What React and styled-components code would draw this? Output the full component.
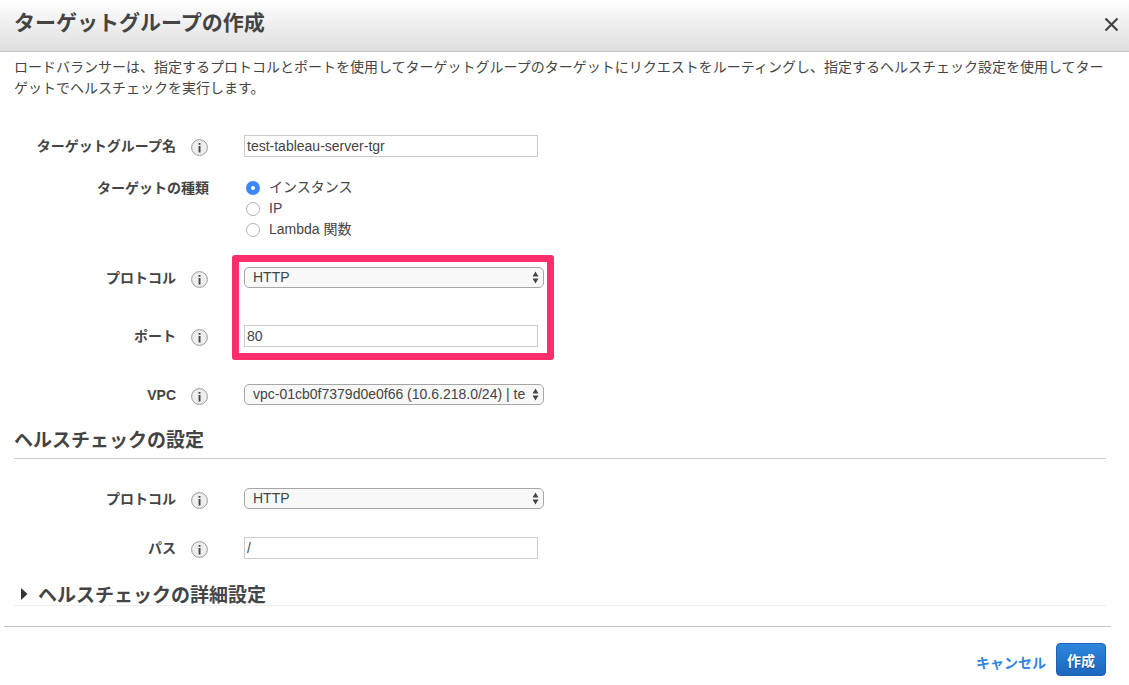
import React, { useState } from 'react';
import styled, { createGlobalStyle } from 'styled-components';

const GlobalStyle = createGlobalStyle`
  * {
    box-sizing: border-box;
  }

  body {
    margin: 0;
    background: #fff;
    color: #444;
    font-family: "Liberation Sans", "Noto Sans CJK JP", sans-serif;
    font-size: 14px;
    line-height: 21px;
  }

  input, select, button {
    font-family: inherit;
    font-size: 14px;
    color: #444;
  }
`;

const Header = styled.header`
  display: flex;
  justify-content: space-between;
  align-items: center;
  height: 52px;
  padding: 0 10px 3px 14px;
  border-bottom: 1px solid #c4c4c4;
  background: linear-gradient(#fff, #dedede);
`;

const Title = styled.h1`
  margin: 0;
  padding-bottom: 2px;
  font-size: 21px;
  line-height: 32px;
`;

const CloseButton = styled.button`
  display: flex;
  padding: 0;
  border: none;
  background: none;
  cursor: pointer;
`;

const Content = styled.div`
  padding: 5px 18px 0 14px;
`;

const Intro = styled.p`
  margin: 0 0 36px;
`;

const Row = styled.div`
  display: grid;
  grid-template-columns: 196px minmax(0, 1fr);
  column-gap: 34px;
  align-items: start;
  min-height: 22px;
  margin-bottom: ${({ $gap }) => $gap || 36}px;
`;

const LabelCell = styled.div`
  display: flex;
  justify-content: flex-end;
  padding: 1px 1px 0 0;
  font-weight: bold;
`;

const InfoButton = styled.button`
  display: flex;
  margin: 3px 1px 0 15px;
  padding: 0;
  border: none;
  background: none;
  cursor: pointer;
`;

const TextInput = styled.input`
  width: 294px;
  max-width: 100%;
  height: 22px;
  padding: 0 2px;
  border: 1px solid #ccc;
  background: #fff;
`;

const SelectWrap = styled.div`
  position: relative;
  width: 300px;
  max-width: 100%;
`;

const SelectBox = styled.select`
  display: block;
  width: 100%;
  height: 21px;
  padding: 0 16px 2px 8px;
  border: 1px solid #a6a6a6;
  border-radius: 5px;
  background: #f8f8f8;
  appearance: none;
`;

const Arrows = styled.svg`
  position: absolute;
  top: 4px;
  right: 5px;
  pointer-events: none;
`;

const RadioGroup = styled.div`
  display: flex;
  flex-direction: column;
  align-items: flex-start;
`;

const RadioLabel = styled.label`
  display: flex;
  align-items: center;
  gap: 9px;
  padding-left: 2px;
`;

const Radio = styled.input`
  appearance: none;
  width: 14px;
  height: 14px;
  margin: 0;
  border: 1px solid #b0b0b0;
  border-radius: 50%;
  background: #fff;

  &:checked {
    border: 5px solid #3b88fd;
  }
`;

const MarkedRows = styled.div`
  position: relative;
`;

const Marker = styled.div`
  position: absolute;
  top: -12px;
  bottom: -13px;
  left: 218px;
  width: 322px;
  border: 7px solid #ff2d6c;
  border-radius: 3px;
  pointer-events: none;
`;

const SectionTitle = styled.h2`
  margin: 0 5px 29px 0;
  padding-bottom: 3px;
  border-bottom: 1px solid #ccc;
  font-size: 19px;
  line-height: 28px;
`;

const DetailsTitle = styled.h2`
  margin: 0 5px 0 0;
  border-bottom: 1px solid #eee;
  line-height: 25px;
`;

const DetailsButton = styled.button`
  display: flex;
  align-items: center;
  gap: 10px;
  height: 25px;
  padding: 2px 0 0 7px;
  border: none;
  background: none;
  font-size: 19px;
  font-weight: bold;
  cursor: pointer;
`;

const Footer = styled.footer`
  display: flex;
  justify-content: flex-end;
  align-items: center;
  gap: 10px;
  margin: 20px 18px 0 4px;
  padding: 16px 5px 8px;
  border-top: 1px solid #c4c4c4;
`;

const CancelLink = styled.a`
  padding-top: 8px;
  color: #2f86dd;
  font-weight: bold;
  text-decoration: none;
`;

const CreateButton = styled.button`
  width: 50px;
  height: 33px;
  padding: 0;
  border: 1px solid #1b62b5;
  border-radius: 4px;
  background: linear-gradient(#2e86dd, #1c67be);
  color: #fff;
  font-weight: bold;
  text-shadow: 0 1px 1px #134a8a;
  cursor: pointer;
`;

const Info = ({ label }) => (
  <InfoButton type="button" aria-label={label}>
    <svg width="17" height="17" viewBox="0 0 17 17">
      <circle cx="8.5" cy="8.5" r="7.9" fill="#eee" stroke="#999" />
      <path d="M7.6 3.9h1.9v1.9H7.6zM7.6 6.9h1.9v6.6H7.6z" fill="#444" />
    </svg>
  </InfoButton>
);

const Field = ({ id, label, gap, children }) => (
  <Row $gap={gap}>
    <LabelCell>
      <label htmlFor={id}>{label}</label>
      <Info label={`${label} 情報`} />
    </LabelCell>
    {children}
  </Row>
);

const Select = ({ id, options }) => (
  <SelectWrap>
    <SelectBox id={id}>
      {options.map((option) => (
        <option key={option}>{option}</option>
      ))}
    </SelectBox>
    <Arrows width="7" height="13" viewBox="0 0 7 13" fill="#444">
      <path d="M3.5 0.5 6.5 5.5h-6zM3.5 12.5 6.5 7.5h-6z" />
    </Arrows>
  </SelectWrap>
);

const targetTypes = [
  { value: 'instance', text: 'インスタンス' },
  { value: 'ip', text: 'IP' },
  { value: 'lambda', text: 'Lambda 関数' },
];

const App = () => {
  const [targetType, setTargetType] = useState('instance');

  return (
    <>
      <GlobalStyle />
      <Header>
        <Title>ターゲットグループの作成</Title>
        <CloseButton type="button" aria-label="閉じる">
          <svg width="15" height="15" viewBox="0 0 15 15" stroke="#444" strokeWidth="2.2">
            <path d="M1.5 1.5 13.5 13.5M13.5 1.5 1.5 13.5" />
          </svg>
        </CloseButton>
      </Header>
      <form onSubmit={(e) => e.preventDefault()}>
        <Content>
          <Intro>
            ロードバランサーは、指定するプロトコルとポートを使用してターゲットグループのターゲットにリクエストをルーティングし、指定するヘルスチェック設定を使用してターゲットでヘルスチェックを実行します。
          </Intro>

          <Field id="name" label="ターゲットグループ名" gap={20}>
            <TextInput id="name" defaultValue="test-tableau-server-tgr" />
          </Field>
          <Row role="radiogroup" aria-labelledby="target-type" $gap={27}>
            <LabelCell id="target-type">ターゲットの種類</LabelCell>
            <RadioGroup>
              {targetTypes.map(({ value, text }) => (
                <RadioLabel key={value}>
                  <Radio
                    type="radio"
                    name="target-type"
                    value={value}
                    checked={targetType === value}
                    onChange={() => setTargetType(value)}
                  />
                  {text}
                </RadioLabel>
              ))}
            </RadioGroup>
          </Row>

          <MarkedRows>
            <Field id="protocol" label="プロトコル">
              <Select id="protocol" options={['HTTP']} />
            </Field>
            <Field id="port" label="ポート" gap={37}>
              <TextInput id="port" defaultValue="80" />
            </Field>
            <Marker />
          </MarkedRows>
          <Field id="vpc" label="VPC" gap={21}>
            <Select id="vpc" options={['vpc-01cb0f7379d0e0f66 (10.6.218.0/24) | te']} />
          </Field>

          <SectionTitle>ヘルスチェックの設定</SectionTitle>
          <Field id="health-protocol" label="プロトコル" gap={27}>
            <Select id="health-protocol" options={['HTTP']} />
          </Field>
          <Field id="health-path" label="パス" gap={21}>
            <TextInput id="health-path" defaultValue="/" />
          </Field>

          <DetailsTitle>
            <DetailsButton type="button" aria-expanded="false">
              <svg width="7" height="12" viewBox="0 0 7 12">
                <path d="M0 0 6.5 6 0 12z" fill="#333" />
              </svg>
              ヘルスチェックの詳細設定
            </DetailsButton>
          </DetailsTitle>
        </Content>
        <Footer>
          <CancelLink href="#">キャンセル</CancelLink>
          <CreateButton type="submit">作成</CreateButton>
        </Footer>
      </form>
    </>
  );
};

export default App;
